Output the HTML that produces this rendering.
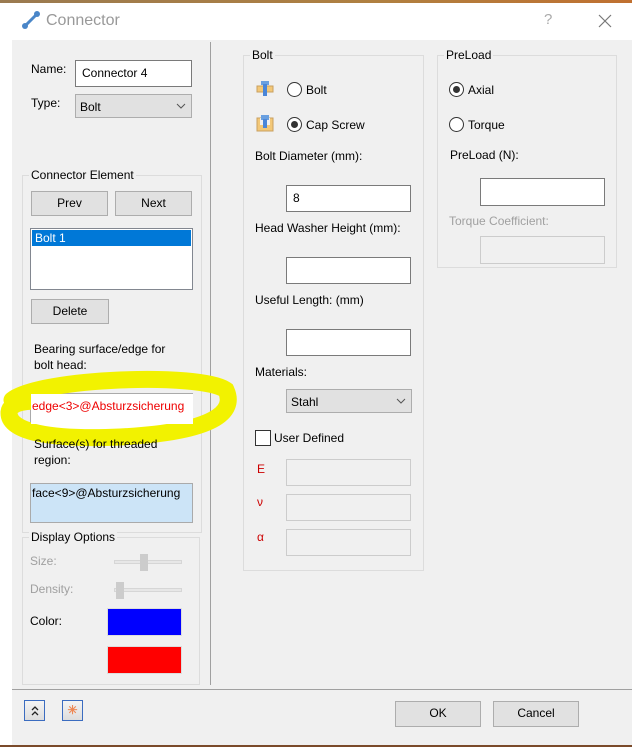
<!DOCTYPE html>
<html><head><style>
*{margin:0;padding:0;box-sizing:border-box}
body{width:632px;height:747px;position:relative;overflow:hidden;background:#fff;font-family:"Liberation Sans",sans-serif;font-size:12px;color:#000}
.a{position:absolute}
.t{position:absolute;white-space:nowrap;line-height:14px}
.in{position:absolute;background:#fff;border:1px solid #7a7a7a}
.dis{position:absolute;background:#f0f0f0;border:1px solid #ccc}
.btn{position:absolute;background:#e1e1e1;border:1px solid #adadad;text-align:center;line-height:23px}
.grp{position:absolute;border:1px solid #dcdcdc}
.gt{position:absolute;background:#f0f0f0;padding:0 2px;line-height:14px;white-space:nowrap}
.rad{position:absolute;width:15px;height:15px;border:1px solid #333;border-radius:50%;background:#fff}
.rad.on::after{content:"";position:absolute;left:3px;top:3px;width:7px;height:7px;border-radius:50%;background:#333}
.gray{color:#a0a0a0}
</style></head><body>
<div class="a" style="left:0;top:0;width:632px;height:3px;background:linear-gradient(90deg,#9a7a50,#b08040 60%,#c07030)"></div>
<svg class="a" style="left:21px;top:10px" width="20" height="20" viewBox="0 0 20 20"><line x1="4" y1="16" x2="16" y2="4" stroke="#4a86c8" stroke-width="3"/><circle cx="4" cy="16" r="3" fill="#4a86c8"/><circle cx="16" cy="4" r="3" fill="#4a86c8"/></svg>
<div class="t" style="left:46px;top:12px;font-size:16px;line-height:18px;color:#999">Connector</div>
<div class="t" style="left:544px;top:13px;font-size:15px;color:#aaa">?</div>
<svg class="a" style="left:598px;top:14px" width="14" height="14"><path d="M1 1L13 13M13 1L1 13" stroke="#777" stroke-width="1.2"/></svg>
<div class="a" style="left:12px;top:40px;width:620px;height:705px;background:#f0f0f0"></div>
<div class="a" style="left:0;top:745px;width:632px;height:2px;background:#7a4a2a"></div>
<div class="a" style="left:210px;top:42px;width:1px;height:643px;background:#a0a0a0"></div>
<div class="a" style="left:12px;top:689px;width:620px;height:1px;background:#a0a0a0"></div>

<div class="t" style="left:31px;top:62px">Name:</div>
<div class="in" style="left:75px;top:60px;width:117px;height:27px"><span class="t" style="left:6px;top:5px">Connector 4</span></div>
<div class="t" style="left:31px;top:96px">Type:</div>
<div class="a" style="left:75px;top:94px;width:117px;height:24px;background:#e1e1e1;border:1px solid #adadad"><span class="t" style="left:4px;top:5px">Bolt</span><svg class="a" style="left:100px;top:8px" width="10" height="6"><path d="M1 1L5 5L9 1" fill="none" stroke="#555"/></svg></div>

<div class="grp" style="left:22px;top:175px;width:180px;height:358px"></div>
<div class="gt" style="left:29px;top:168px">Connector Element</div>
<div class="btn" style="left:31px;top:191px;width:77px;height:25px">Prev</div>
<div class="btn" style="left:115px;top:191px;width:77px;height:25px">Next</div>
<div class="in" style="left:30px;top:228px;width:163px;height:62px;border-color:#828790"><div class="a" style="left:1px;top:1px;width:159px;height:16px;background:#0078d7;color:#fff;padding-left:3px;line-height:16px">Bolt 1</div></div>
<div class="btn" style="left:31px;top:299px;width:78px;height:25px">Delete</div>
<div class="t" style="left:34px;top:342px">Bearing surface/edge for</div>
<div class="t" style="left:34px;top:358px">bolt head:</div>
<div class="a" style="left:30px;top:393px;width:163px;height:43px;background:#fff;border:1px solid #aaa"></div>
<svg class="a" style="left:0;top:360px" width="240" height="90"><path d="M12 40 C 40 18, 200 12, 226 30 C 236 52, 215 72, 120 77 C 50 80, 8 72, 9 52 C 10 42, 30 40, 40 42" fill="none" stroke="#f2f200" stroke-width="17" stroke-linecap="round"/></svg>
<div class="a" style="left:31px;top:394px;width:162px;height:30px;background:#fff"></div>
<div class="t" style="left:32px;top:399px;color:#e00;width:160px;overflow:hidden">edge&lt;3&gt;@Absturzsicherung</div>
<div class="t" style="left:34px;top:437px">Surface(s) for threaded</div>
<div class="t" style="left:34px;top:453px">region:</div>
<div class="a" style="left:30px;top:483px;width:163px;height:40px;background:#cce4f7;border:1px solid #aaa"></div>
<div class="t" style="left:32px;top:486px;width:160px;overflow:hidden">face&lt;9&gt;@Absturzsicherung</div>

<div class="grp" style="left:22px;top:537px;width:178px;height:148px"></div>
<div class="gt" style="left:29px;top:530px">Display Options</div>
<div class="t gray" style="left:30px;top:554px">Size:</div>
<div class="a" style="left:114px;top:560px;width:68px;height:4px;border:1px solid #d6d6d6;background:#e7e7e7"></div>
<div class="a" style="left:140px;top:554px;width:8px;height:17px;background:#ccc"></div>
<div class="t gray" style="left:30px;top:582px">Density:</div>
<div class="a" style="left:114px;top:588px;width:68px;height:4px;border:1px solid #d6d6d6;background:#e7e7e7"></div>
<div class="a" style="left:116px;top:582px;width:8px;height:17px;background:#ccc"></div>
<div class="t" style="left:30px;top:614px">Color:</div>
<div class="a" style="left:107px;top:608px;width:75px;height:28px;background:#00f;border:1px solid #ddd"></div>
<div class="a" style="left:107px;top:646px;width:75px;height:28px;background:#f00;border:1px solid #ddd"></div>

<div class="a" style="left:24px;top:700px;width:21px;height:21px;border:1px solid #3b6cc0;background:linear-gradient(#f4f4f4,#ddd)"><svg class="a" style="left:5px;top:4px" width="10" height="12"><path d="M2 5L5 2L8 5M2 10L5 7L8 10" fill="none" stroke="#222" stroke-width="1.3"/></svg></div>
<div class="a" style="left:62px;top:700px;width:21px;height:21px;border:1px solid #3b6cc0;background:linear-gradient(#f4f4f4,#ddd);text-align:center;font-size:12px;line-height:19px;color:#e85"><b>✳</b></div>
<div class="btn" style="left:395px;top:701px;width:86px;height:26px">OK</div>
<div class="btn" style="left:493px;top:701px;width:86px;height:26px">Cancel</div>

<div class="grp" style="left:243px;top:55px;width:181px;height:516px"></div>
<div class="gt" style="left:250px;top:48px">Bolt</div>
<svg class="a" style="left:256px;top:80px" width="18" height="18"><rect x="1" y="6" width="16" height="6" fill="#f3c878" stroke="#c9a060"/><rect x="5" y="1" width="8" height="4" fill="#6aa0e0"/><rect x="7" y="4" width="4" height="12" fill="#4a86d8"/></svg>
<div class="rad" style="left:287px;top:82px"></div>
<div class="t" style="left:306px;top:83px">Bolt</div>
<svg class="a" style="left:256px;top:114px" width="18" height="18"><rect x="1" y="4" width="16" height="13" fill="#f3c878" stroke="#c9a060"/><rect x="4" y="4" width="10" height="7" fill="#f0f0f0"/><rect x="5" y="1" width="8" height="5" fill="#6aa0e0"/><rect x="7" y="5" width="4" height="9" fill="#4a86d8"/></svg>
<div class="rad on" style="left:287px;top:117px"></div>
<div class="t" style="left:306px;top:118px">Cap Screw</div>
<div class="t" style="left:255px;top:149px">Bolt Diameter (mm):</div>
<div class="in" style="left:286px;top:185px;width:125px;height:27px"><span class="t" style="left:6px;top:5px">8</span></div>
<div class="t" style="left:255px;top:221px">Head Washer Height (mm):</div>
<div class="in" style="left:286px;top:257px;width:125px;height:27px"></div>
<div class="t" style="left:255px;top:293px">Useful Length: (mm)</div>
<div class="in" style="left:286px;top:329px;width:125px;height:27px"></div>
<div class="t" style="left:255px;top:365px">Materials:</div>
<div class="a" style="left:286px;top:389px;width:126px;height:24px;background:#e1e1e1;border:1px solid #adadad"><span class="t" style="left:4px;top:5px">Stahl</span><svg class="a" style="left:109px;top:8px" width="10" height="6"><path d="M1 1L5 5L9 1" fill="none" stroke="#555"/></svg></div>
<div class="a" style="left:255px;top:430px;width:16px;height:16px;border:1px solid #333;background:#fff"></div>
<div class="t" style="left:274px;top:431px">User Defined</div>
<div class="t" style="left:257px;top:462px;color:#c00">E</div>
<div class="dis" style="left:286px;top:459px;width:125px;height:27px"></div>
<div class="t" style="left:257px;top:495px;color:#c00">ν</div>
<div class="dis" style="left:286px;top:494px;width:125px;height:27px"></div>
<div class="t" style="left:257px;top:530px;color:#c00">α</div>
<div class="dis" style="left:286px;top:529px;width:125px;height:27px"></div>

<div class="grp" style="left:437px;top:55px;width:180px;height:213px"></div>
<div class="gt" style="left:444px;top:48px">PreLoad</div>
<div class="rad on" style="left:449px;top:82px"></div>
<div class="t" style="left:468px;top:83px">Axial</div>
<div class="rad" style="left:449px;top:117px"></div>
<div class="t" style="left:468px;top:118px">Torque</div>
<div class="t" style="left:450px;top:148px">PreLoad (N):</div>
<div class="in" style="left:480px;top:178px;width:125px;height:28px"></div>
<div class="t gray" style="left:449px;top:214px">Torque Coefficient:</div>
<div class="dis" style="left:480px;top:236px;width:125px;height:28px"></div>
</body></html>
